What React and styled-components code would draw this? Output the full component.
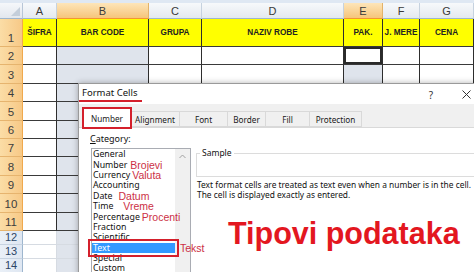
import React from "react";
import styled, { createGlobalStyle, css } from "styled-components";

const GlobalStyle = createGlobalStyle`
  html, body {
    margin: 0;
    padding: 0;
    background: #fff;
    overflow: hidden;
  }
`;

const COLUMNS = [
  { label: "A", width: 34, title: "ŠIFRA" },
  { label: "B", width: 92, title: "BAR CODE", selected: true },
  { label: "C", width: 53, title: "GRUPA" },
  { label: "D", width: 142, title: "NAZIV ROBE" },
  { label: "E", width: 39, title: "PAK.", selected: true },
  { label: "F", width: 37, title: "J. MERE" },
  { label: "G", width: 54, title: "CENA" },
];

const ROWS = Array.from({ length: 14 }, (_, i) => i + 1);
const TABLE_ROWS = 11;

const TABS = [
  { label: "Number", width: 48, active: true },
  { label: "Alignment", width: 49 },
  { label: "Font", width: 48 },
  { label: "Border", width: 38 },
  { label: "Fill", width: 44 },
  { label: "Protection", width: 52 },
];

const CATEGORIES = [
  { name: "General" },
  { name: "Number", note: "Brojevi", gap: 3 },
  { name: "Currency", note: "Valuta", gap: 2 },
  { name: "Accounting" },
  { name: "Date", note: "Datum", gap: 6 },
  { name: "Time", note: "Vreme", gap: 10 },
  { name: "Percentage", note: "Procenti", gap: 2 },
  { name: "Fraction" },
  { name: "Scientific" },
  { name: "Text", note: "Tekst", gap: 5, selected: true },
  { name: "Special" },
  { name: "Custom" },
];

const Screen = styled.div`
  position: relative;
  width: 474px;
  height: 272px;
  overflow: hidden;
  box-sizing: border-box;
  padding-top: 3px;
  background: #dfe8f3;
  font-family: "Liberation Sans", Arial, sans-serif;
`;

const Sheet = styled.div`
  display: grid;
  grid-template-columns: 23px ${p => p.$columns};
  grid-template-rows: 16px 28px repeat(10, 18.4px) repeat(3, 14px);
  background: #fff;
`;

const Corner = styled.div`
  position: relative;
  box-sizing: border-box;
  background: linear-gradient(#f5f7fa, #e2e7ee);
  border-right: 1px solid #b8c6d7;
  border-bottom: 1px solid #9eb6ce;

  &::after {
    content: "";
    position: absolute;
    right: 2px;
    bottom: 2px;
    border-left: 9px solid transparent;
    border-bottom: 9px solid #c4ceda;
  }
`;

const ColHead = styled.div`
  box-sizing: border-box;
  display: flex;
  align-items: center;
  justify-content: center;
  font-size: 11px;
  color: #3a3a3a;
  border-right: 1px solid ${p => (p.$selected ? "#e3b36a" : "#c6d2df")};
  border-bottom: 1px solid ${p => (p.$selected ? "#f29536" : "#9eb6ce")};
  background: ${p =>
    p.$selected
      ? "linear-gradient(#fde5b9, #f6c57b)"
      : "linear-gradient(#f7f9fb, #e4e9ef)"};
`;

const RowHead = styled.div`
  box-sizing: border-box;
  display: flex;
  align-items: flex-end;
  justify-content: center;
  padding-bottom: ${p => (p.$selected ? 1 : 0)}px;
  font-size: ${p => (p.$selected ? 11.5 : 11)}px;
  line-height: 13px;
  color: ${p => (p.$selected ? "#3d3d3d" : "#2c4666")};
  border-right: 1px solid ${p => (p.$selected ? "#f0a94d" : "#9eb6ce")};
  border-bottom: 1px solid ${p => (p.$selected ? "#e6b46e" : "#c7d3e1")};
  background: ${p =>
    p.$selected
      ? "linear-gradient(90deg, #fbdda6, #f7c987)"
      : "linear-gradient(90deg, #eaf0f7, #dfe7f2)"};
`;

const Cell = styled.div`
  box-sizing: border-box;
  display: flex;
  align-items: center;
  justify-content: center;
  font-size: 8.2px;
  font-weight: bold;
  color: #222;
  white-space: nowrap;
  border-right: 1px solid ${p => (p.$table ? "#2e2e2e" : "#d6dbe2")};
  border-bottom: ${p => (p.$table ? "1.5px solid #3a3a3a" : "1px solid #d6dbe2")};
  background: ${p => (p.$title ? "#ffff00" : p.$shade ? "#dfe4ec" : "#fff")};

  ${p =>
    p.$active &&
    css`
      background: #fff;
      box-shadow: inset 0 0 0 2px #2a2a2a;
    `}
`;

const Dialog = styled.div`
  position: absolute;
  left: 78px;
  top: 83px;
  width: 410px;
  height: 200px;
  display: flex;
  flex-direction: column;
  background: #fff;
  border: 1px solid #9a9a9a;
  box-shadow: 0 0 6px rgba(0, 0, 0, 0.3);
  font-family: "Noto Sans", "Open Sans", sans-serif;
  color: #111;
`;

const TitleBar = styled.div`
  display: flex;
  align-items: flex-start;
  height: 20px;
  padding-top: 3px;
  box-sizing: border-box;
`;

const TitleText = styled.span`
  font-size: 9.5px;
  line-height: 12px;
  padding: 0 4px 1px 3px;
  border-bottom: 2px solid #d4202c;
`;

const TitleButton = styled.span`
  width: ${p => p.$w}px;
  height: 15px;
  display: flex;
  align-items: center;
  justify-content: center;
  font-size: 10px;
  color: #333;
  margin-left: ${p => (p.$first ? "auto" : "0")};
`;

const TabStrip = styled.div`
  display: flex;
  align-items: flex-end;
  height: 23px;
  padding-left: 4px;
  background: #f0f0f0;
  border-bottom: 1px solid #d9d9d9;
`;

const Tab = styled.div`
  box-sizing: border-box;
  width: ${p => p.$w}px;
  height: ${p => (p.$active ? 20 : 16)}px;
  margin-bottom: ${p => (p.$active ? -1 : 0)}px;
  display: flex;
  align-items: center;
  justify-content: center;
  font-size: 8.2px;
  color: #1a1a1a;
  border: 1px solid #d9d9d9;
  border-left-width: ${p => (p.$active ? 1 : 0)}px;
  background: ${p => (p.$active ? "#fff" : "#f0f0f0")};

  ${p =>
    p.$active &&
    css`
      border-bottom-color: #fff;
      outline: 2px solid #d4202c;
      outline-offset: -1px;
      position: relative;
      z-index: 1;
    `}
`;

const Body = styled.div`
  flex: 1;
  display: flex;
  padding: 5px 0 0 12px;
`;

const CategoryColumn = styled.div`
  width: 100px;
  display: flex;
  flex-direction: column;
`;

const FieldLabel = styled.div`
  font-size: 9px;
  line-height: 11px;
  margin: 0 0 4px -1px;

  u {
    text-decoration-thickness: 1px;
    text-underline-offset: 1px;
  }
`;

const ListBox = styled.div`
  flex: 1;
  display: flex;
  border: 1px solid #a9acb3;
  border-bottom: none;
`;

const ListItems = styled.div`
  width: 83px;
  display: flex;
  flex-direction: column;
`;

const ListRow = styled.div`
  display: flex;
  align-items: center;
  height: 10.4px;
  white-space: nowrap;
  position: relative;
  z-index: ${p => (p.$selected ? 2 : 0)};
`;

const ItemText = styled.span`
  font-size: 8.8px;
  line-height: 10px;
  padding-left: 1px;
  ${p =>
    p.$selected &&
    css`
      flex: 0 0 82px;
      background: #3399ff;
      color: #fff;
      outline: 2px solid #d4202c;
      outline-offset: 2px;
    `}
`;

const Note = styled.span`
  margin-left: ${p => p.$gap}px;
  font-family: "Liberation Sans", Arial, sans-serif;
  font-size: 10.5px;
  line-height: 10px;
  color: #cc2f45;
`;

const ScrollBar = styled.div`
  width: 15px;
  background: #f0f0f0;
  display: flex;
  justify-content: center;
  padding-top: 5px;
  box-sizing: border-box;
`;

const DetailColumn = styled.div`
  flex: 1;
  display: flex;
  flex-direction: column;
  margin-left: 5px;
`;

const SampleBox = styled.fieldset`
  margin: 14px 0 0;
  padding: 0;
  border: 1px solid #dcdcdc;

  legend {
    font-size: 8.5px;
    line-height: 12px;
    padding: 0 2px;
    margin-left: 3px;
  }
`;

const SampleValue = styled.div`
  height: 17px;
`;

const Description = styled.p`
  margin: 3px 0 0 1px;
  font-size: 8.4px;
  line-height: 9.6px;
  color: #111;
  white-space: nowrap;
`;

const Headline = styled.div`
  margin: 19px 0 0 32px;
  font-family: "Liberation Sans", Arial, sans-serif;
  font-weight: bold;
  font-size: 30.5px;
  line-height: 30px;
  color: #e3171f;
  white-space: nowrap;
`;

function CloseIcon() {
  return (
    <svg width="9" height="9" viewBox="0 0 9 9">
      <path d="M0.5 0.5 L8.5 8.5 M8.5 0.5 L0.5 8.5" stroke="#333" strokeWidth="1" />
    </svg>
  );
}

function ChevronUp() {
  return (
    <svg width="7" height="5" viewBox="0 0 7 5">
      <path d="M0.5 4 L3.5 1 L6.5 4" stroke="#a0a0a0" strokeWidth="1" fill="none" />
    </svg>
  );
}

export default function App() {
  const columns = COLUMNS.map(c => `${c.width}px`).join(" ");

  return (
    <Screen>
      <GlobalStyle />
      <Sheet $columns={columns}>
        <Corner />
        {COLUMNS.map(c => (
          <ColHead key={c.label} $selected={c.selected}>
            {c.label}
          </ColHead>
        ))}
        {ROWS.map(r => (
          <React.Fragment key={r}>
            <RowHead $selected={r <= TABLE_ROWS}>{r}</RowHead>
            {COLUMNS.map(c => (
              <Cell
                key={c.label}
                $table={r <= TABLE_ROWS}
                $title={r === 1}
                $shade={r > 1 && c.selected}
                $active={r === 2 && c.label === "E"}
              >
                {r === 1 ? c.title : null}
              </Cell>
            ))}
          </React.Fragment>
        ))}
      </Sheet>

      <Dialog>
        <TitleBar>
          <TitleText>Format Cells</TitleText>
          <TitleButton $w={24} $first>?</TitleButton>
          <TitleButton $w={46}>
            <CloseIcon />
          </TitleButton>
        </TitleBar>

        <TabStrip>
          {TABS.map(t => (
            <Tab key={t.label} $w={t.width} $active={t.active}>
              {t.label}
            </Tab>
          ))}
        </TabStrip>

        <Body>
          <CategoryColumn>
            <FieldLabel>
              <u>C</u>ategory:
            </FieldLabel>
            <ListBox>
              <ListItems>
                {CATEGORIES.map(c => (
                  <ListRow key={c.name} $selected={c.selected}>
                    <ItemText $selected={c.selected}>{c.name}</ItemText>
                    {c.note && <Note $gap={c.gap}>{c.note}</Note>}
                  </ListRow>
                ))}
              </ListItems>
              <ScrollBar>
                <ChevronUp />
              </ScrollBar>
            </ListBox>
          </CategoryColumn>

          <DetailColumn>
            <SampleBox>
              <legend>Sample</legend>
              <SampleValue />
            </SampleBox>
            <Description>
              Text format cells are treated as text even when a number is in the cell.
              <br />
              The cell is displayed exactly as entered.
            </Description>
            <Headline>Tipovi podataka</Headline>
          </DetailColumn>
        </Body>
      </Dialog>
    </Screen>
  );
}
